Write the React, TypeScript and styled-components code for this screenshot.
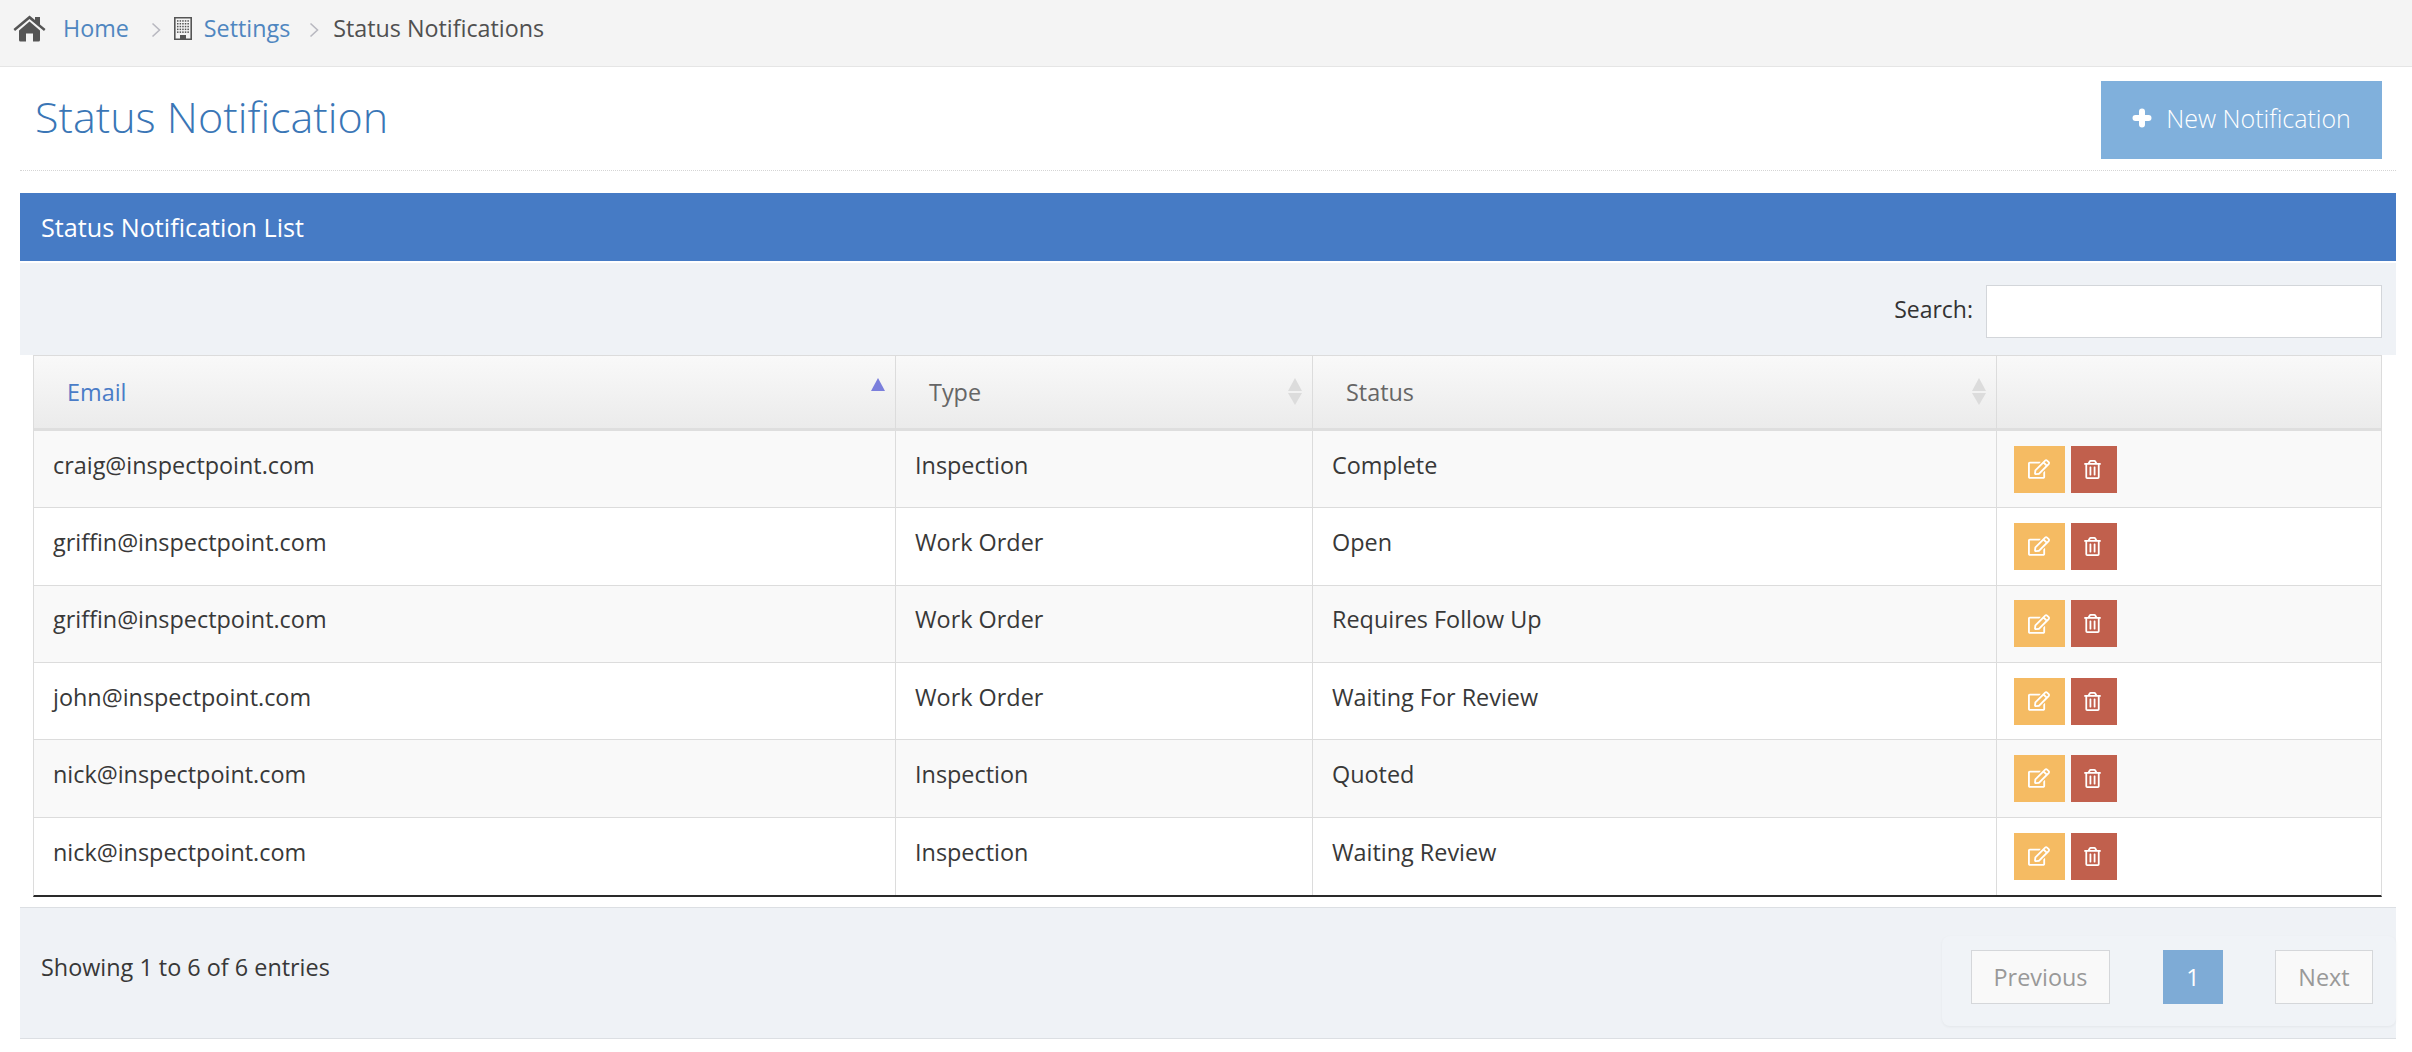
import React from "react";
import styled, { createGlobalStyle } from "styled-components";
import { FaRegEdit, FaRegTrashAlt } from "react-icons/fa";

const Global = createGlobalStyle`
  html, body { margin: 0; padding: 0; background: #fff; }
  body { font-family: "Open Sans", "Liberation Sans", sans-serif; color: #333; }
`;

const Page = styled.div`
  width: 2412px;
  height: 1052px;
  overflow: hidden;
`;

const Breadcrumb = styled.nav`
  height: 66px;
  box-sizing: content-box;
  background: #f4f4f4;
  border-bottom: 1px solid #e5e5e5;
  display: flex;
  align-items: center;
  padding: 0 0 0 13px;
  font-size: 23.3px;
`;

const BreadcrumbInner = styled.div`
  display: flex;
  align-items: center;
  height: 56px;
  margin-top: -10px;
`;

const Crumb = styled.a`
  color: #4f86c0;
  text-decoration: none;
`;

const Current = styled.span`
  color: #505050;
`;

const Chevron = styled.svg<{ $ml: number; $mr: number }>`
  width: 10px;
  height: 16px;
  margin: 4px ${(p) => p.$mr}px 0 ${(p) => p.$ml}px;
  fill: none;
  stroke: #b8b8c0;
  stroke-width: 1.6;
`;

const HomeIcon = styled.svg`
  width: 33px;
  height: 27px;
  margin: 0 17px 0 0;
  fill: #555;
`;

const BuildingIcon = styled.svg`
  width: 18px;
  height: 23px;
  margin: 0 12px 0 0;
  fill: #555;
`;

const PlusIcon = styled.svg`
  width: 20px;
  height: 20px;
  fill: none;
  stroke: #fff;
  stroke-width: 6;
  stroke-linecap: round;
`;

const Main = styled.main`
  padding: 0 16px 0 20px;
`;

const TitleRow = styled.header`
  border-bottom: 1px dotted #d5d5d5;
  display: flex;
  justify-content: space-between;
  align-items: flex-start;
  padding: 14px 14px 0 15px;
  box-sizing: content-box;
  height: 89px;
`;

const Title = styled.h1`
  margin: 8px 0 0;
  font-size: 43.1px;
  line-height: 56px;
  font-weight: 300;
  color: #3a76b6;
`;

const NewButton = styled.button`
  width: 281px;
  height: 78px;
  border: 0;
  padding: 0 0 5px;
  background: #80b0dc;
  color: #fff;
  font: 300 25px "Open Sans", sans-serif;
  display: flex;
  align-items: center;
  justify-content: center;
  gap: 14px;
`;

const Panel = styled.section`
  margin-top: 22px;
`;

const PanelHead = styled.div`
  height: 68px;
  background: #467bc5;
  color: #fff;
  font-size: 25.2px;
  display: flex;
  align-items: center;
  padding-left: 21px;
`;

const FilterBar = styled.div`
  margin-top: 2px;
  height: 92px;
  box-sizing: border-box;
  background: #eff2f6;
  display: flex;
  justify-content: flex-end;
  align-items: flex-start;
  padding: 22px 14px 0 0;
  font-size: 23px;
  color: #333;
`;

const SearchLabel = styled.label`
  line-height: 48px;
  margin-right: 13px;
`;

const SearchInput = styled.input`
  width: 396px;
  height: 53px;
  box-sizing: border-box;
  border: 1.5px solid #d3d6da;
  background: #fff;
  outline: none;
`;

const TableWrap = styled.div`
  padding: 0 14px 0 13px;
`;

const Table = styled.table`
  width: 100%;
  table-layout: fixed;
  border-collapse: separate;
  border-spacing: 0;
  border-left: 1px solid #dcdcdc;
  border-right: 1px solid #dcdcdc;
  border-top: 1px solid #dcdcdc;
  border-bottom: 2px solid #2a2a2a;
  font-size: 23.4px;
`;

const Th = styled.th<{ $active?: boolean; $w?: number }>`
  position: relative;
  box-sizing: border-box;
  height: 75px;
  width: ${(p) => (p.$w ? `${p.$w}px` : "auto")};
  padding: 0 0 0 33px;
  text-align: left;
  font-weight: 400;
  color: ${(p) => (p.$active ? "#4a7cc7" : "#666")};
  background: linear-gradient(#f9f9f9, #ebebeb);
  border-bottom: 3px solid #dedede;
  border-right: 1px solid #dcdcdc;
  &:last-child { border-right: 0; }
`;

const SortMark = styled.svg`
  position: absolute;
  right: 9px;
  top: 22px;
  width: 16px;
  height: 28px;
`;

const Tr = styled.tr`
  &:nth-child(odd) td { background: #f9f9f9; }
  &:nth-child(even) td { background: #fff; }
  &:last-child td { border-bottom: 0; }
`;

const Td = styled.td`
  box-sizing: border-box;
  height: 77.33px;
  padding: 0 0 9px 19px;
  border-bottom: 1px solid #dcdcdc;
  border-right: 1px solid #dcdcdc;
  color: #383838;
  &:last-child { border-right: 0; padding: 0 0 0 17px; }
`;

const Actions = styled.div`
  display: flex;
  gap: 6px;
`;

const ActionBtn = styled.button<{ $bg: string; $w: number; $shift: number }>`
  width: ${(p) => p.$w}px;
  height: 47px;
  border: 0;
  padding: 0 ${(p) => p.$shift}px 0 0;
  background: ${(p) => p.$bg};
  color: #fff;
  display: flex;
  align-items: center;
  justify-content: center;
`;

const Footer = styled.footer`
  margin-top: 10px;
  height: 130px;
  box-sizing: content-box;
  background: #eff2f6;
  border-top: 1px solid #dcdfe3;
  border-bottom: 1px solid #dcdfe3;
  display: flex;
  justify-content: space-between;
  align-items: flex-start;
  font-size: 23.4px;
`;

const Info = styled.div`
  padding: 43px 0 0 21px;
  line-height: 32px;
  color: #383838;
`;

const Pager = styled.div`
  width: 454px;
  height: 90px;
  margin-top: 28px;
  box-sizing: border-box;
  border-radius: 8px;
  background: #f0f3f7;
  box-shadow: 0 1px 3px rgba(0, 0, 0, 0.05);
  display: flex;
  align-items: flex-start;
  padding: 14px 0 0 29px;
`;

const PageBtn = styled.button<{ $current?: boolean; $w: number; $ml?: number }>`
  width: ${(p) => p.$w}px;
  height: 54px;
  margin-left: ${(p) => p.$ml ?? 0}px;
  padding: 0;
  box-sizing: border-box;
  border: ${(p) => (p.$current ? "0" : "1.5px solid #d5d7da")};
  background: ${(p) => (p.$current ? "#7eabd6" : "#f9f9f9")};
  color: ${(p) => (p.$current ? "#fff" : "#999")};
  font: 400 23.4px "Open Sans", sans-serif;
`;

const rows = [
  ["craig@inspectpoint.com", "Inspection", "Complete"],
  ["griffin@inspectpoint.com", "Work Order", "Open"],
  ["griffin@inspectpoint.com", "Work Order", "Requires Follow Up"],
  ["john@inspectpoint.com", "Work Order", "Waiting For Review"],
  ["nick@inspectpoint.com", "Inspection", "Quoted"],
  ["nick@inspectpoint.com", "Inspection", "Waiting Review"],
];

const Sort = ({ active }: { active?: boolean }) => (
  <SortMark viewBox="0 0 16 28">
    <polygon points="8,0 15,13 1,13" fill={active ? "#7b7fdc" : "#dcdcdc"} />
    {!active && <polygon points="1,15 15,15 8,27" fill="#dcdcdc" />}
  </SortMark>
);

const Sep = ({ ml, mr }: { ml: number; mr: number }) => (
  <Chevron viewBox="0 0 10 16" $ml={ml} $mr={mr}>
    <path d="M1.5 1.5 L8.5 8 L1.5 14.5" />
  </Chevron>
);

const Home = () => (
  <HomeIcon viewBox="0 0 33 27">
    <path d="M0.5 14 L16.5 0.5 L22 5 V2 H27 V9.5 L32.5 14 L31 16 L16.5 4 L2 16 Z" />
    <path d="M6 15.5 L16.5 6.5 L27 15.5 V25 q0 1.5 -1.5 1.5 H20 V18.5 H13 V26.5 H7.5 q-1.5 0 -1.5 -1.5 Z" />
  </HomeIcon>
);

const Building = () => (
  <BuildingIcon viewBox="0 0 18 23">
    <path fillRule="evenodd" d="M0 0 H18 V23 H0 Z M1.6 1.6 V21.4 H6 V18 H12 V21.4 H16.4 V1.6 Z" />
    {[3, 5.6, 8.2, 10.8, 13.4].map((x) =>
      [3.2, 6, 8.8, 11.6, 14.4].map((y) => <rect key={`${x}-${y}`} x={x} y={y} width="1.5" height="1.5" />)
    )}
  </BuildingIcon>
);

const Plus = () => (
  <PlusIcon viewBox="0 0 20 20">
    <path d="M10 3.5 V16.5 M3.5 10 H16.5" />
  </PlusIcon>
);

export default function App() {
  return (
    <Page>
      <Global />
      <Breadcrumb>
        <BreadcrumbInner>
          <Home />
          <Crumb href="#">Home</Crumb>
          <Sep ml={22} mr={13} />
          <Building />
          <Crumb href="#">Settings</Crumb>
          <Sep ml={19} mr={14} />
          <Current>Status Notifications</Current>
        </BreadcrumbInner>
      </Breadcrumb>
      <Main>
        <TitleRow>
          <Title>Status Notification</Title>
          <NewButton>
            <Plus />
            New Notification
          </NewButton>
        </TitleRow>
        <Panel>
          <PanelHead>Status Notification List</PanelHead>
          <FilterBar>
            <SearchLabel>Search:</SearchLabel>
            <SearchInput />
          </FilterBar>
          <TableWrap>
            <Table>
              <thead>
                <tr>
                  <Th $active $w={862}>Email<Sort active /></Th>
                  <Th $w={417}>Type<Sort /></Th>
                  <Th $w={684}>Status<Sort /></Th>
                  <Th />
                </tr>
              </thead>
              <tbody>
                {rows.map((r, i) => (
                  <Tr key={i}>
                    <Td>{r[0]}</Td>
                    <Td>{r[1]}</Td>
                    <Td>{r[2]}</Td>
                    <Td>
                      <Actions>
                        <ActionBtn $bg="#f5bb63" $w={51} $shift={2}><FaRegEdit size={22} /></ActionBtn>
                        <ActionBtn $bg="#c1604d" $w={46} $shift={3}><FaRegTrashAlt size={19} /></ActionBtn>
                      </Actions>
                    </Td>
                  </Tr>
                ))}
              </tbody>
            </Table>
          </TableWrap>
          <Footer>
            <Info>Showing 1 to 6 of 6 entries</Info>
            <Pager>
              <PageBtn $w={139}>Previous</PageBtn>
              <PageBtn $current $w={60} $ml={53}>1</PageBtn>
              <PageBtn $w={98} $ml={52}>Next</PageBtn>
            </Pager>
          </Footer>
        </Panel>
      </Main>
    </Page>
  );
}
